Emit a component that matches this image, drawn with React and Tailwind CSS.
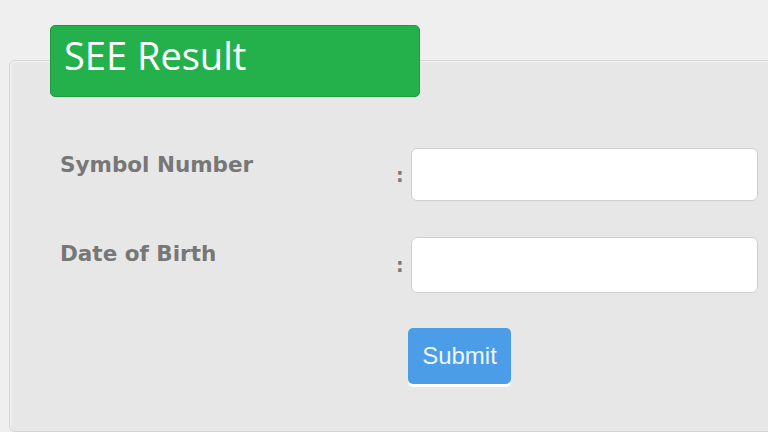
export default function App() {
  return (
    <div className="h-[432px] w-[768px] overflow-hidden bg-[#efefef] pl-[9px] pt-[60px]">
      <div className="relative h-[372px] w-[790px] rounded-md border border-[#d4d4d4] bg-[#e7e7e7] shadow-[inset_1px_1px_0_#f3f3f3]">
        {/* Title badge */}
        <div
          className="absolute left-[40px] top-[-36px] flex h-[72px] w-[370px] items-center rounded-[5px] border border-[#1f9a42] bg-[#24b14c] pl-[13px] pb-[12px] text-[38px] text-white"
          style={{ fontFamily: '"Open Sans", "Noto Sans", sans-serif' }}
        >
          SEE Result
        </div>

        <div
          className="flex flex-col pl-[50px] pt-[87px]"
          style={{ fontFamily: '"DejaVu Sans", Verdana, sans-serif' }}
        >
          {/* Symbol Number */}
          <div className="flex items-start">
            <div className="w-[336px] pt-[1px] text-[21.5px] font-bold text-[#777777]">
              Symbol Number
            </div>
            <div className="w-[15px] pt-[13px] text-[19px] font-bold text-[#7a7a7a]">:</div>
            <input
              type="text"
              className="h-[53px] w-[347px] rounded-[6px] border border-[#cfcfcf] bg-white outline-none"
            />
          </div>

          {/* Date of Birth */}
          <div className="mt-[36px] flex items-start">
            <div className="w-[336px] pt-[1px] text-[21.5px] font-bold text-[#777777]">
              Date of Birth
            </div>
            <div className="w-[15px] pt-[14px] text-[19px] font-bold text-[#7a7a7a]">:</div>
            <input
              type="text"
              className="h-[56px] w-[347px] rounded-[6px] border border-[#cfcfcf] bg-white outline-none"
            />
          </div>

          <div className="mt-[35px] pl-[348px]">
            <button
              className="h-[56px] w-[103px] rounded-[5px] bg-[#4a9de6] text-[24px] text-[#eef6ff] shadow-[0_3px_0_#ffffff]"
              style={{ fontFamily: '"Liberation Sans", Arial, sans-serif' }}
            >
              Submit
            </button>
          </div>
        </div>
      </div>
    </div>
  );
}
